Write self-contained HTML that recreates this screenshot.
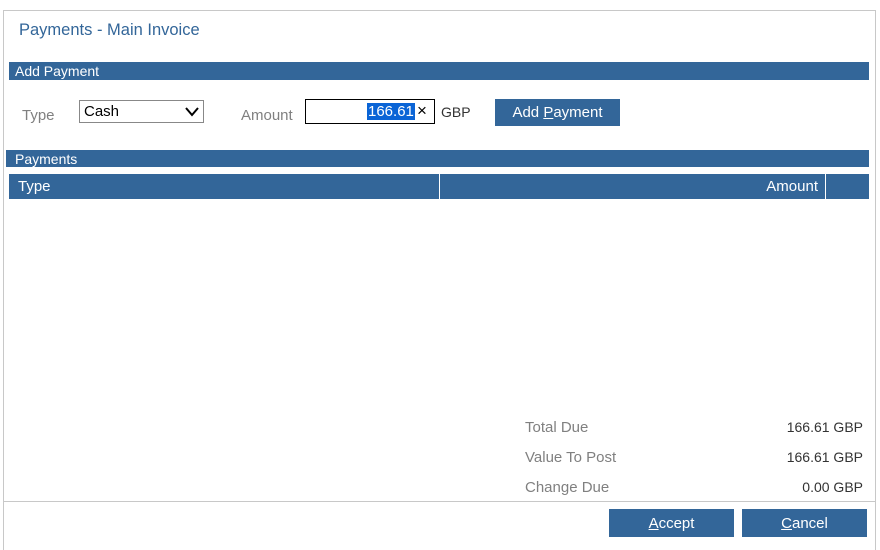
<!DOCTYPE html>
<html><head><meta charset="utf-8"><style>
*{box-sizing:border-box;margin:0;padding:0}
body{width:880px;height:543px;background:#fff;font-family:"Liberation Sans",sans-serif;position:relative;overflow:hidden}
.a{position:absolute}
.frame{left:3px;top:10px;width:873px;height:540px;border:1px solid #c8c8c8;border-bottom:none}
.bar{background:#336699;color:#fff;font-size:14px;line-height:18px;padding-left:6px}
.btn{background:#336699;color:#fff;font-size:15px;text-align:center}
.lbl{color:#808080;font-size:15px}
.v{color:#333;font-size:14px;text-align:right}
</style></head><body>
<div class="a frame"></div>
<div class="a" style="left:19px;top:21px;color:#336699;font-size:16.5px">Payments - Main Invoice</div>
<div class="a bar" style="left:9px;top:62px;width:860px;height:18px">Add Payment</div>
<div class="a lbl" style="left:22px;top:107px">Type</div>
<div class="a" style="left:79px;top:100px;width:125px;height:23px;border:1px solid #888;font-size:15px;padding:2px 4px">Cash
<svg class="a" style="right:4px;top:6px" width="14" height="10" viewBox="0 0 14 10"><path d="M1 1 L7 8 L13 1" fill="none" stroke="#000" stroke-width="2"/></svg></div>
<div class="a lbl" style="left:241px;top:107px">Amount</div>
<div class="a" style="left:305px;top:99px;width:130px;height:25px;border:1px solid #000"></div>
<div class="a" style="left:367px;top:103px;background:#0a64d6;color:#fff;font-size:15px;line-height:17px;padding:0 1px">166.61</div>
<div class="a" style="left:417px;top:101px;font-size:17px">×</div>
<div class="a" style="left:441px;top:104px;font-size:14px;color:#333">GBP</div>
<div class="a btn" style="left:495px;top:99px;width:125px;height:27px;line-height:28px">Add <u>P</u>ayment</div>
<div class="a bar" style="left:6px;top:150px;width:863px;height:17px;padding-left:9px">Payments</div>
<div class="a bar" style="left:9px;top:174px;width:860px;height:25px;line-height:25px;font-size:15px;padding-left:9px">Type</div>
<div class="a" style="left:439px;top:174px;width:1px;height:25px;background:#fff"></div>
<div class="a" style="left:825px;top:174px;width:1px;height:25px;background:#fff"></div>
<div class="a" style="left:740px;top:174px;width:78px;line-height:25px;color:#fff;font-size:15px;text-align:right">Amount</div>
<div class="a lbl" style="left:525px;top:419px">Total Due</div>
<div class="a lbl" style="left:525px;top:449px">Value To Post</div>
<div class="a lbl" style="left:525px;top:479px">Change Due</div>
<div class="a v" style="left:700px;top:419px;width:163px">166.61 GBP</div>
<div class="a v" style="left:700px;top:449px;width:163px">166.61 GBP</div>
<div class="a v" style="left:700px;top:479px;width:163px">0.00 GBP</div>
<div class="a" style="left:3px;top:501px;width:873px;height:1px;background:#c8c8c8"></div>
<div class="a btn" style="left:609px;top:509px;width:125px;height:28px;line-height:30px"><u>A</u>ccept</div>
<div class="a btn" style="left:742px;top:509px;width:125px;height:28px;line-height:30px"><u>C</u>ancel</div>
</body></html>
